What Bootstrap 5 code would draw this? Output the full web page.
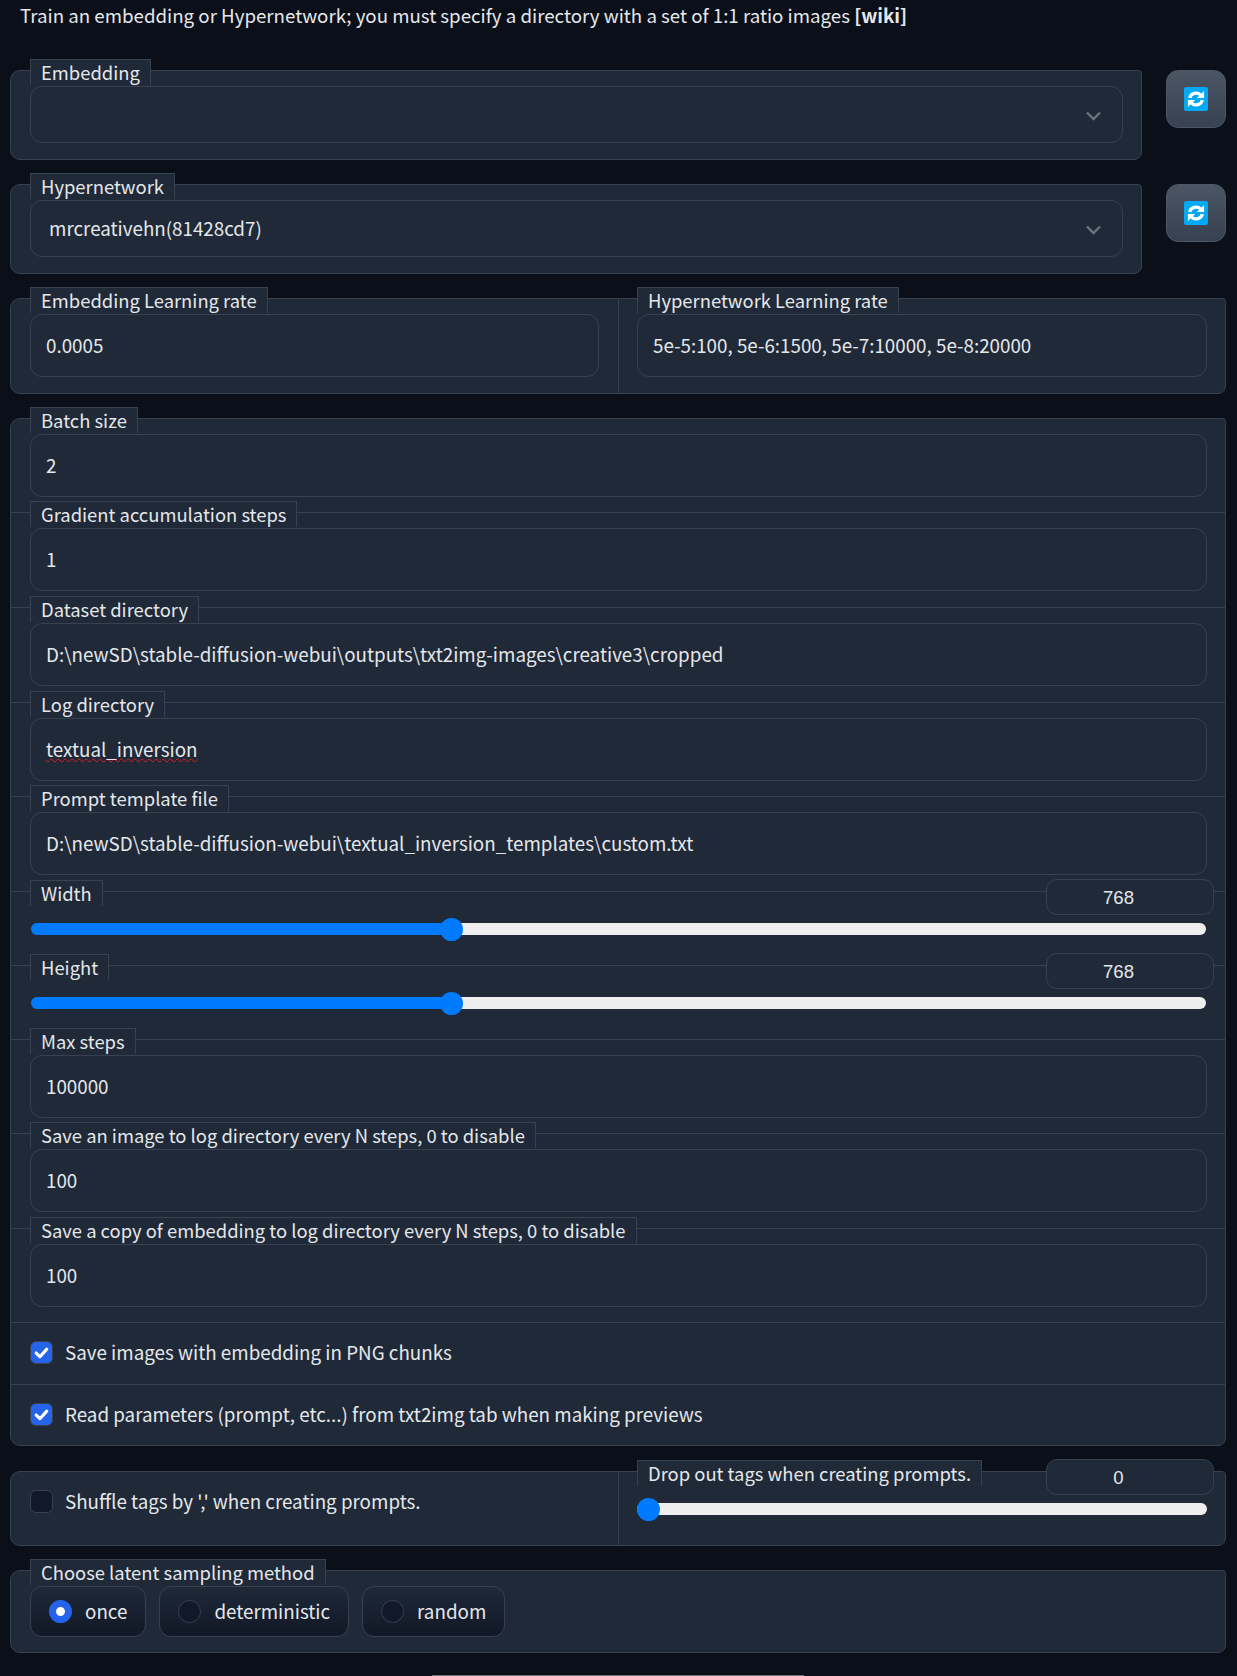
<!doctype html>
<html lang="en">
<head>
<meta charset="utf-8">
<title>Train</title>
<link href="https://cdn.jsdelivr.net/npm/bootstrap@5.3.0/dist/css/bootstrap.min.css" rel="stylesheet">
<style>
html,body{height:100%}
body{background:#0b0f19;color:#e5e7eb;font-family:"Noto Sans CJK JP","Liberation Sans",sans-serif;font-size:18.8px;line-height:26px;overflow:hidden}
.page-wrap{padding:0 11px 0 10px;height:1676px;position:relative}
.intro-line{height:70px;margin:0;padding:2px 0 0 10px;font-size:18.7px}
.intro-line b{font-weight:700;color:#e5e7eb}
.stack-main{display:flex;flex-direction:column;gap:24px}
.panel-box{background:#1f2937;border:1px solid #374151;border-radius:10px 4px 8px 10px}
.h-select{height:90px}
.h-lr{height:96px}
.h-main{height:1028px}
.h-shuffle{height:75px;margin-top:1px}
.h-latent{height:83px}
.field-sec{display:flow-root;padding:0 18px 0 19px;border-top:1px solid #374151}
.field-sec:first-child,.sec-col{border-top:0}
.sec-input{height:94.75px}
.field-sec.sec-input:first-child{height:93px}
.sec-slider{height:74px}
.sec-slider~.sec-input{height:94.4px}
.sec-check{height:62px;display:flex;align-items:center;padding-bottom:3px}
.cap-tag{display:block;width:fit-content;height:26px;margin:-12px 0 1px;padding:0 10px;background:#1f2937;border:1px solid #374151;border-bottom:0;white-space:nowrap;color:#e5e7eb;line-height:25px;font-size:18.4px}
.text-box{height:63px;border:1px solid #374151;border-radius:12px;padding:0 15px;line-height:59px;color:#e5e7eb;background:transparent;white-space:nowrap}
.pick-box{height:57px;border:1px solid #374151;border-radius:12px;padding:0 18px;line-height:53px;position:relative;color:#e5e7eb;background:transparent}
.pick-box svg{position:absolute;right:21px;top:24px}
.refresh-btn{width:60px;height:58px;flex:none;border-radius:12px;border:1px solid #4b5563;background:linear-gradient(to bottom,#4b5563,#374151);padding:0;display:flex;align-items:center;justify-content:center}
.num-box{width:168px;height:36px;border:1px solid #374151;border-radius:11px;font:18.6px/36px "Liberation Sans",sans-serif;text-align:center;padding-right:23px;color:#e5e7eb;background:#1f2937;margin:-13px -7px 0 0;flex:none}
.slider-head{display:flex;justify-content:space-between;align-items:flex-start;height:25px}
.slider-head .cap-tag{margin:-12px 0 0}
.range-bar{-webkit-appearance:none;appearance:none;display:block;width:1175px;max-width:calc(100% - 1px);height:24px;margin:0 0 0 1px;background:transparent;padding:0}
.sec-col .range-bar{margin-left:0;max-width:100%}
.range-bar::-webkit-slider-runnable-track{height:12px;border-radius:6px;background:linear-gradient(to right,#007bff var(--pct),#eeeeee var(--pct))}
.range-bar::-webkit-slider-thumb{-webkit-appearance:none;width:23px;height:23px;border-radius:50%;background:#007bff;border:0;margin-top:-5.5px}
.tick-input{width:23px;height:23px;flex:none;margin:0 12px 0 0;border:1px solid #374151;border-radius:6px;background-color:#111827;background-size:100% 100%;-webkit-appearance:none;appearance:none}
.tick-input:checked{background-color:#2563eb;background-image:url("data:image/svg+xml,%3csvg xmlns='http://www.w3.org/2000/svg' viewBox='0 0 16 16'%3e%3cpath fill='none' stroke='%23fff' stroke-linecap='round' stroke-linejoin='round' stroke-width='2.4' d='M4 8.4l2.8 2.8L12 5.4'/%3e%3c/svg%3e")}
.sec-col{flex:1 1 0;min-width:0;padding-right:19px}
.sec-col:first-child{flex:0 0 607px}
.sec-col+.sec-col{border-left:1px solid #374151;padding:0 18px}
.shuffle-cell{padding-top:16px}
.radio-chip{display:flex;align-items:center;height:51px;border:1px solid #374151;border-radius:12px;background:linear-gradient(to bottom,#1f2937,#111827);padding:0 18px 1px}
.dot-input{width:23px;height:23px;flex:none;margin:0 13px 0 0;border:1px solid #374151;border-radius:50%;background:#111827;-webkit-appearance:none;appearance:none}
.dot-input:checked{border:7px solid #2563eb;background:#fff}
.spell-mark{text-decoration:underline wavy #e11d24 1px;text-underline-offset:1px;text-decoration-skip-ink:none}
.foot-rule{position:absolute;left:432px;top:1675px;width:372px;height:1px;background:#6b7280}
</style>
</head>
<body>
<div class="page-wrap">
  <p class="intro-line">Train an embedding or Hypernetwork; you must specify a directory with a set of 1:1 ratio images <b>[wiki]</b></p>
  <div class="stack-main">
    <div class="d-flex" style="gap:24px">
      <div class="panel-box h-select flex-grow-1">
        <div class="field-sec"><span class="cap-tag">Embedding</span>
          <div class="pick-box"><svg width="15" height="10" viewBox="0 0 15 10"><path d="M1 1.500l6.500 6.500L14 1.500" fill="none" stroke="#6b7280" stroke-width="2.400"/></svg></div></div>
      </div>
      <button class="refresh-btn" type="button" aria-label="Refresh"><svg width="24" height="24" viewBox="0 0 24 24"><rect width="24" height="24" rx="2" fill="#03a9f4"/><g transform="translate(12 12) scale(.9) translate(-12 -12)"><path d="M5 11a7 6.500 0 0 1 12-3.500M19 13a7 6.500 0 0 1-12 3.500" fill="none" stroke="#fff" stroke-width="3.600"/><path d="M13 11h8V3zM11 13H3V21z" fill="#fff"/></g></svg></button>
    </div>
    <div class="d-flex" style="gap:24px">
      <div class="panel-box h-select flex-grow-1">
        <div class="field-sec"><span class="cap-tag">Hypernetwork</span>
          <div class="pick-box">mrcreativehn(81428cd7)<svg width="15" height="10" viewBox="0 0 15 10"><path d="M1 1.500l6.500 6.500L14 1.500" fill="none" stroke="#6b7280" stroke-width="2.400"/></svg></div></div>
      </div>
      <button class="refresh-btn" type="button" aria-label="Refresh"><svg width="24" height="24" viewBox="0 0 24 24"><rect width="24" height="24" rx="2" fill="#03a9f4"/><g transform="translate(12 12) scale(.9) translate(-12 -12)"><path d="M5 11a7 6.500 0 0 1 12-3.500M19 13a7 6.500 0 0 1-12 3.500" fill="none" stroke="#fff" stroke-width="3.600"/><path d="M13 11h8V3zM11 13H3V21z" fill="#fff"/></g></svg></button>
    </div>
    <div class="panel-box h-lr d-flex">
      <div class="sec-col field-sec"><span class="cap-tag">Embedding Learning rate</span><div class="text-box">0.0005</div></div>
      <div class="sec-col field-sec"><span class="cap-tag">Hypernetwork Learning rate</span><div class="text-box">5e-5:100, 5e-6:1500, 5e-7:10000, 5e-8:20000</div></div>
    </div>
    <div class="panel-box h-main">
      <div class="field-sec sec-input"><span class="cap-tag">Batch size</span><div class="text-box">2</div></div>
      <div class="field-sec sec-input"><span class="cap-tag">Gradient accumulation steps</span><div class="text-box">1</div></div>
      <div class="field-sec sec-input"><span class="cap-tag">Dataset directory</span><div class="text-box">D:\newSD\stable-diffusion-webui\outputs\txt2img-images\creative3\cropped</div></div>
      <div class="field-sec sec-input"><span class="cap-tag">Log directory</span><div class="text-box"><span class="spell-mark">textual_inversion</span></div></div>
      <div class="field-sec sec-input"><span class="cap-tag">Prompt template file</span><div class="text-box">D:\newSD\stable-diffusion-webui\textual_inversion_templates\custom.txt</div></div>
      <div class="field-sec sec-slider"><div class="slider-head"><span class="cap-tag">Width</span><div class="num-box">768</div></div><input class="range-bar" type="range" min="64" max="2048" step="64" value="768" style="--pct:36%"></div>
      <div class="field-sec sec-slider"><div class="slider-head"><span class="cap-tag">Height</span><div class="num-box">768</div></div><input class="range-bar" type="range" min="64" max="2048" step="64" value="768" style="--pct:36%"></div>
      <div class="field-sec sec-input"><span class="cap-tag">Max steps</span><div class="text-box">100000</div></div>
      <div class="field-sec sec-input"><span class="cap-tag">Save an image to log directory every N steps, 0 to disable</span><div class="text-box">100</div></div>
      <div class="field-sec sec-input"><span class="cap-tag">Save a copy of embedding to log directory every N steps, 0 to disable</span><div class="text-box">100</div></div>
      <div class="field-sec sec-check"><input class="tick-input" type="checkbox" checked><span>Save images with embedding in PNG chunks</span></div>
      <div class="field-sec sec-check"><input class="tick-input" type="checkbox" checked><span>Read parameters (prompt, etc...) from txt2img tab when making previews</span></div>
    </div>
    <div class="panel-box h-shuffle d-flex">
      <div class="sec-col field-sec shuffle-cell"><div class="d-flex align-items-center"><input class="tick-input" type="checkbox"><span>Shuffle tags by ',' when creating prompts.</span></div></div>
      <div class="sec-col field-sec"><div class="slider-head"><span class="cap-tag">Drop out tags when creating prompts.</span><div class="num-box">0</div></div><input class="range-bar" type="range" min="0" max="1" step="0.1" value="0" style="--pct:0%"></div>
    </div>
    <div class="panel-box h-latent">
      <div class="field-sec"><span class="cap-tag">Choose latent sampling method</span>
        <div class="d-flex" style="gap:13px">
          <label class="radio-chip"><input class="dot-input" type="radio" name="lat" checked>once</label>
          <label class="radio-chip"><input class="dot-input" type="radio" name="lat">deterministic</label>
          <label class="radio-chip"><input class="dot-input" type="radio" name="lat">random</label>
        </div>
      </div>
    </div>
  </div>
  <div class="foot-rule"></div>
</div>
<script src="https://cdn.jsdelivr.net/npm/bootstrap@5.3.0/dist/js/bootstrap.bundle.min.js"></script>
</body>
</html>
